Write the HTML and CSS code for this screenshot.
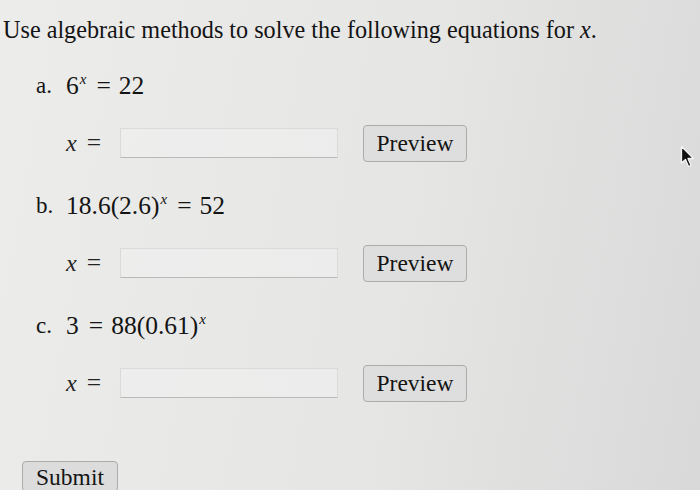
FILE: index.html
```html
<!DOCTYPE html>
<html lang="en">
  <head>
    <meta charset="UTF-8" />
    <title>Exponential equations</title>
    <link rel="stylesheet" href="styles.css">
  </head>
  <body>
    <section class="question">
      <p class="prompt">Use algebraic methods to solve the following equations for <i class="mvar">x</i>.</p>

      <div class="part">
        <div class="eq-line">
          <span class="label">a.</span>
          <span class="math">6<sup class="mvar">x</sup><span class="op">=</span>22</span>
        </div>
        <div class="answer-row">
          <span class="math var"><i class="mvar">x</i><span class="op">=</span></span>
          <span class="answer-box"></span>
          <button class="preview">Preview</button>
        </div>
      </div>

      <div class="part">
        <div class="eq-line">
          <span class="label">b.</span>
          <span class="math">18.6(2.6)<sup class="mvar">x</sup><span class="op">=</span>52</span>
        </div>
        <div class="answer-row">
          <span class="math var"><i class="mvar">x</i><span class="op">=</span></span>
          <span class="answer-box"></span>
          <button class="preview">Preview</button>
        </div>
      </div>

      <div class="part">
        <div class="eq-line">
          <span class="label">c.</span>
          <span class="math">3<span class="op">=</span>88(0.61)<sup class="mvar">x</sup></span>
        </div>
        <div class="answer-row">
          <span class="math var"><i class="mvar">x</i><span class="op">=</span></span>
          <span class="answer-box"></span>
          <button class="preview">Preview</button>
        </div>
      </div>

      <button class="submit">Submit</button>
    </section>

    <!-- mouse pointer sitting over the page -->
    <svg class="cursor" width="16" height="24" viewBox="0 0 16 24">
      <path d="M1.5 1.5 L1.5 18 L5.5 14.5 L8.5 21.5 L11 20.5 L8 13.5 L13.5 13.5 Z" fill="#111" stroke="#f4f4f4" stroke-width="1.3" stroke-linejoin="round" />
    </svg>
  </body>
</html>
```

FILE: styles.css
```css
* {
  padding: 0;
  margin: 0;
  box-sizing: border-box;
}

body {
  width: 700px;
  height: 490px;
  overflow: hidden;
  position: relative;
  font-family: "Liberation Serif", "Times New Roman", serif;
  color: #141414;
  background: linear-gradient(100deg, #ececeb 0%, #e6e6e5 55%, #d9d9d9 100%);
}

.question {
  padding: 14px 0 0 3px;
}

.prompt {
  font-size: 24.2px;
  line-height: 32px;
  height: 52px;
}

.mvar {
  font-family: "Liberation Serif", serif;
  font-style: italic;
}

.part {
  margin-bottom: 23px;
}

.eq-line {
  display: flex;
  align-items: center;
  height: 40px;
  padding-left: 33px;
  font-size: 23px;
}

.label {
  width: 30px;
}

.math {
  font-size: 25.5px;
}

.math sup {
  font-size: 15px;
  vertical-align: 10px;
  line-height: 0;
  margin-left: 1px;
}

.op {
  margin: 0 8px 0 10px;
}

.answer-row {
  display: flex;
  align-items: center;
  height: 40px;
  margin-top: 17px;
  padding-left: 63px;
}

.var {
  width: 54px;
  color: #222;
}

.var .mvar {
  font-size: 24px;
}

.answer-box {
  width: 218px;
  height: 30px;
  border: 1px solid #dadada;
  border-bottom-color: #b9b9b9;
  background: rgba(240, 240, 240, 0.6);
}

.preview {
  margin-left: 25px;
  width: 104px;
  height: 37px;
  font-family: "Liberation Serif", "Times New Roman", serif;
  font-size: 23.5px;
  color: #141414;
  background: #dedede;
  border: 1px solid #ababab;
  border-radius: 4px;
}

.submit {
  margin: 35px 0 0 19px;
  width: 96px;
  height: 31px;
  line-height: 26px;
  font-family: "Liberation Serif", "Times New Roman", serif;
  font-size: 23.5px;
  color: #141414;
  background: #dcdcdc;
  border: 1px solid #ababab;
  border-radius: 4px;
}

.cursor {
  position: absolute;
  left: 680px;
  top: 145px;
}
```
